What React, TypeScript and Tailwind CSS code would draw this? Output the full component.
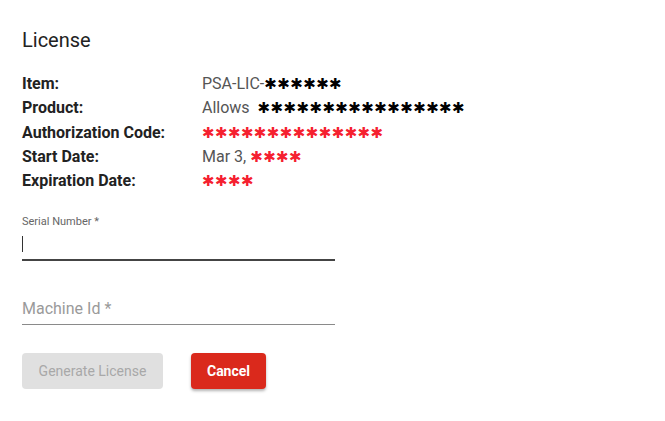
import React from "react";

const Stars = ({ n, red }: { n: number; red?: boolean }) => (
  <span
    className={
      "font-['DejaVu_Sans',sans-serif] text-[15px] tracking-[0.4px] " +
      (red ? "text-[#f5202f]" : "text-black")
    }
  >
    {"✱".repeat(n)}
  </span>
);

export default function App() {
  const rows: [string, React.ReactNode][] = [
    ["Item:", <>PSA-LIC-<Stars n={6} /></>],
    ["Product:", <>Allows&nbsp; <Stars n={16} /></>],
    ["Authorization Code:", <Stars n={14} red />],
    ["Start Date:", <>Mar 3, <Stars n={4} red /></>],
    ["Expiration Date:", <Stars n={4} red />],
  ];
  return (
    <div className="w-[665px] h-[421px] bg-white font-['Roboto',sans-serif] relative">
      <div className="px-[22px] pt-[28px]">
        <h2 className="text-[20px] leading-[24px] text-[#222]">License</h2>
        <div className="mt-[20px] flex flex-col">
          {rows.map(([k, v]) => (
            <div key={k} className="flex h-[24.3px] items-center text-[16px]">
              <div className="w-[180px] font-bold text-[#222]">{k}</div>
              <div className="text-[#555]">{v}</div>
            </div>
          ))}
        </div>
        <div className="mt-[22px] w-[313px]">
          <div className="text-[11px] leading-[14px] text-[#666]">Serial Number *</div>
          <div className="h-[32px] pt-[7px] border-b-2 border-[#444] flex items-start">
            <div className="w-px h-[16px] bg-[#333]"></div>
          </div>
        </div>
        <div className="mt-[38px] w-[313px] border-b border-[#8a8a8a] pb-[5px] text-[16px] leading-[20px] text-[#9a9a9a]">
          Machine Id *
        </div>
        <div className="mt-[28px] flex gap-[28px]">
          <button className="w-[141px] h-[36px] rounded-[4px] bg-[#e0e0e0] text-[14px] text-[#a8a8a8]">
            Generate License
          </button>
          <button className="w-[75px] h-[36px] rounded-[4px] bg-[#da291c] text-[14px] font-bold text-white shadow-[0_2px_3px_rgba(0,0,0,0.3)]">
            Cancel
          </button>
        </div>
      </div>
    </div>
  );
}
